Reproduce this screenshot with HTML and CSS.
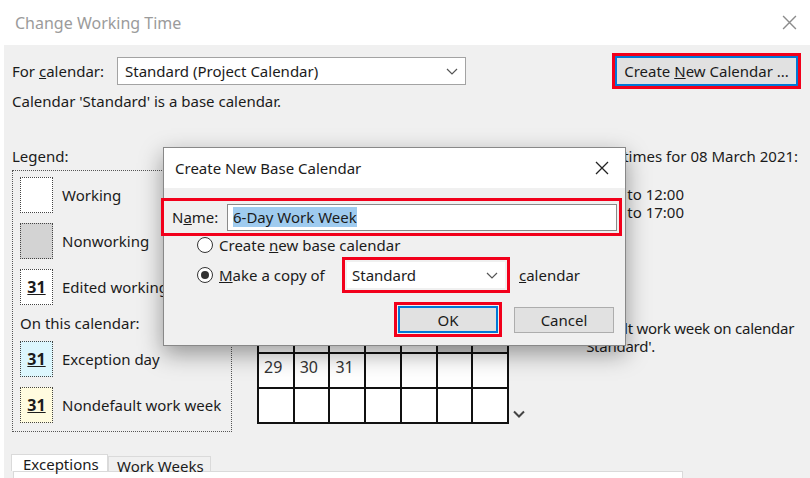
FILE: index.html
```html
<!DOCTYPE html>
<html lang="en">
<head>
    <meta charset="UTF-8">
    <title>Change Working Time</title>
    <link rel="stylesheet" href="styles.css">
</head>
<body>
    <div class="window">
        <div class="titlebar">
            <span class="title">Change Working Time</span>
            <svg class="close grey" viewBox="0 0 14 14"><path d="M1 1L13 13M13 1L1 13"/></svg>
        </div>

        <div class="content">
            <div class="calendar-row">
                <span class="for-label">For <u>c</u>alendar:</span>
                <div class="select wide">
                    <span>Standard (Project Calendar)</span>
                    <svg class="chev" viewBox="0 0 12 7"><path d="M1 1L6 6L11 1"/></svg>
                </div>
                <div class="mark new-cal"><button class="btn focus">Create <u>N</u>ew Calendar ...</button></div>
            </div>
            <div class="note">Calendar 'Standard' is a base calendar.</div>

            <div class="main">
                <div class="legend">
                    <div class="legend-title">Legend:</div>
                    <div class="legend-box">
                        <div class="item"><span class="swatch"></span>Working</div>
                        <div class="item"><span class="swatch nonworking"></span>Nonworking</div>
                        <div class="item"><span class="swatch"><b>31</b></span>Edited working hours</div>
                        <div class="on-cal">On this calendar:</div>
                        <div class="item"><span class="swatch exception"><b>31</b></span>Exception day</div>
                        <div class="item"><span class="swatch nondefault"><b>31</b></span>Nondefault work week</div>
                    </div>
                </div>

                <div class="calendar">
                    <div class="cal-label">Click on a day to see its working times:</div>
                    <div class="month-head">March 2021</div>
                    <div class="cal-wrap">
                        <table class="month">
                            <thead>
                                <tr><th>M</th><th>T</th><th>W</th><th>Th</th><th>F</th><th>S</th><th>Su</th></tr>
                            </thead>
                            <tbody>
                                <tr><td>1</td><td>2</td><td>3</td><td>4</td><td>5</td><td class="off">6</td><td class="off">7</td></tr>
                                <tr><td class="sel">8</td><td>9</td><td>10</td><td>11</td><td>12</td><td class="off">13</td><td class="off">14</td></tr>
                                <tr><td>15</td><td>16</td><td>17</td><td>18</td><td>19</td><td class="off">20</td><td class="off">21</td></tr>
                                <tr><td>22</td><td>23</td><td>24</td><td>25</td><td>26</td><td class="off">27</td><td class="off">28</td></tr>
                                <tr><td>29</td><td>30</td><td>31</td><td></td><td></td><td></td><td></td></tr>
                                <tr><td></td><td></td><td></td><td></td><td></td><td></td><td></td></tr>
                            </tbody>
                        </table>
                        <div class="scroll">
                            <svg class="scroll-chev" viewBox="0 0 12 8"><path d="M1 6L6 1L11 6"/></svg>
                            <svg class="scroll-chev" viewBox="0 0 12 8"><path d="M1 1.5L6 6.5L11 1.5"/></svg>
                        </div>
                    </div>
                </div>

                <div class="info">
                    <div class="info-head">Working times for 08 March 2021:</div>
                    <ul class="times">
                        <li>08:00 to 12:00</li>
                        <li>13:00 to 17:00</li>
                    </ul>
                    <div class="based">Based on:</div>
                    <ul class="times last">
                        <li>Default work week on calendar<br>'Standard'.</li>
                    </ul>
                </div>
            </div>

            <div class="tabs">
                <span class="tab active">Exceptions</span>
                <span class="tab">Work Weeks</span>
            </div>
            <div class="tab-panel"></div>
        </div>

        <div class="dialog">
            <div class="dlg-title">
                <span>Create New Base Calendar</span>
                <svg class="close" viewBox="0 0 14 14"><path d="M1 1L13 13M13 1L1 13"/></svg>
            </div>
            <div class="dlg-body">
                <div class="mark name-row">
                    <span class="name-label">N<u>a</u>me:</span>
                    <div class="text-input"><span class="selected">6-Day Work Week</span></div>
                </div>
                <div class="radio-row">
                    <span class="radio"></span>
                    <span>Create <u>n</u>ew base calendar</span>
                </div>
                <div class="radio-row copy-row">
                    <span class="radio checked"></span>
                    <span class="copy-label"><u>M</u>ake a copy of</span>
                    <div class="mark copy-frame">
                        <div class="select small">
                            <span>Standard</span>
                            <svg class="chev" viewBox="0 0 12 7"><path d="M1 1L6 6L11 1"/></svg>
                        </div>
                    </div>
                    <span class="cal-word"><u>c</u>alendar</span>
                </div>
                <div class="dlg-buttons">
                    <div class="mark ok-frame"><button class="btn focus">OK</button></div>
                    <button class="btn cancel">Cancel</button>
                </div>
            </div>
        </div>
    </div>
</body>
</html>
```

FILE: styles.css
```css
* {
    box-sizing: border-box;
}
body {
    margin: 0;
    font-family: "Noto Sans", "Open Sans", sans-serif;
    font-size: 15px;
    color: #1b1b1b;
    background: #fff;
}
.window {
    position: relative;
    width: 810px;
    height: 478px;
    overflow: hidden;
    background: #fff;
}
.titlebar {
    height: 45px;
    display: flex;
    align-items: center;
    justify-content: space-between;
    padding: 0 13px 0 15px;
}
.title {
    font-size: 16px;
    color: #9b9b9b;
}
.close {
    width: 14px;
    height: 14px;
    fill: none;
    stroke: #222;
    stroke-width: 1.3;
}
.close.grey {
    width: 15px;
    height: 15px;
    stroke: #8c8c8c;
}
.content {
    margin-left: 4px;
    height: 433px;
    background: #f0f0f0;
    padding: 8px 9px 0 8px;
}

/* top row */
.calendar-row {
    display: flex;
    align-items: center;
    height: 36px;
}
.for-label {
    width: 105px;
}
.select {
    display: flex;
    align-items: center;
    justify-content: space-between;
    background: #fff;
    border: 1px solid #a3a3a3;
    height: 28px;
    padding: 0 7px 0 7px;
}
.select.wide {
    width: 349px;
}
.chev {
    width: 12px;
    height: 7px;
    fill: none;
    stroke: #555;
    stroke-width: 1.2;
}
.mark {
    border: 3px solid #f2001b;
}
.new-cal {
    margin-left: auto;
}
.btn {
    font: inherit;
    color: #1b1b1b;
    background: #e1e1e1;
    border: 1px solid #adadad;
    padding: 0;
    height: 26px;
}
.btn.focus {
    border: 2px solid #0078d7;
}
.new-cal .btn {
    display: block;
    width: 183px;
    height: 30px;
}
.note {
    margin-top: 2px;
    line-height: 20px;
}

/* legend, calendar, info */
.main {
    display: flex;
    margin-top: 35px;
}
.legend {
    width: 220px;
    flex-shrink: 0;
}
.legend-title {
    line-height: 20px;
    margin-bottom: 4px;
}
.legend-box {
    height: 262px;
    border: 1px dotted #555;
    padding: 6px 0 0 7px;
}
.item {
    display: flex;
    align-items: center;
    height: 36px;
    margin-bottom: 10px;
    white-space: nowrap;
}
.swatch {
    flex-shrink: 0;
    width: 33px;
    height: 36px;
    margin-right: 9px;
    border: 1px dotted #444;
    background: #fff;
    display: flex;
    align-items: center;
    justify-content: center;
}
.swatch b {
    text-decoration: underline;
    font-size: 16px;
}
.nonworking {
    background: #d3d3d3;
}
.exception {
    background: #dcf6fd;
}
.nondefault {
    background: #fffbdf;
}
.on-cal {
    line-height: 20px;
    margin: -2px 0 8px;
}

.calendar {
    width: 275px;
    flex-shrink: 0;
    margin-left: 25px;
}
.cal-label {
    line-height: 20px;
    white-space: nowrap;
}
.month-head {
    text-align: center;
    line-height: 24px;
}
.cal-wrap {
    display: flex;
    align-items: stretch;
}
.month {
    border-collapse: collapse;
    table-layout: fixed;
    width: 252px;
    background: #fff;
}
.month th {
    font-weight: normal;
    height: 22px;
    background: #f0f0f0;
}
.month td {
    border: 2px solid #111;
    height: 35px;
    padding: 2px 0 0 5px;
    vertical-align: top;
    font-size: 16px;
    color: #333;
}
.month td.off {
    background: #d3d3d3;
}
.scroll {
    display: flex;
    flex-direction: column;
    justify-content: space-between;
    padding: 30px 0 6px 4px;
}
.scroll-chev {
    width: 12px;
    height: 8px;
    fill: none;
    stroke: #444;
    stroke-width: 2;
}

.info {
    flex: 1;
    min-width: 0;
    margin: 0 -9px 0 26px;
    line-height: 18px;
}
.info-head {
    line-height: 20px;
    white-space: nowrap;
    margin-left: 2px;
}
.times {
    margin: 19px 0 0;
    padding-left: 27px;
    white-space: nowrap;
}
.based {
    margin: 60px 0 0 -4px;
}
.times.last {
    margin-top: 20px;
    padding-left: 25px;
    letter-spacing: -0.25px;
}

/* tabs */
.tabs {
    display: flex;
    align-items: flex-end;
    margin: 22px 0 0 -1px;
    height: 17px;
}
.tab {
    height: 15px;
    line-height: 18px;
    padding: 0 6px 0 8px;
    border: 1px solid #dadada;
    border-bottom: none;
    white-space: nowrap;
}
.tab.active {
    height: 17px;
    width: 97px;
    padding-left: 11px;
    background: #fff;
}
.tab-panel {
    width: 670px;
    height: 20px;
    margin-left: 1px;
    background: #fff;
    border: 1px solid #dadada;
}

/* dialog */
.dialog {
    position: absolute;
    left: 163px;
    top: 147px;
    width: 463px;
    height: 199px;
    background: #f0f0f0;
    border: 1px solid #888;
    box-shadow: 0 8px 22px rgba(0, 0, 0, 0.38);
}
.dlg-title {
    height: 40px;
    background: #fff;
    display: flex;
    align-items: center;
    justify-content: space-between;
    padding: 0 16px 0 11px;
}
.dlg-body {
    padding-right: 11px;
}
.name-row {
    display: flex;
    align-items: center;
    width: 461px;
    height: 38px;
    margin: 10px 0 0 -3px;
    padding: 0 2px 0 8px;
}
.name-label {
    width: 55px;
}
.text-input {
    flex: 1;
    height: 27px;
    background: #fff;
    border: 1px solid #8a8a8a;
    display: flex;
    align-items: center;
    padding-left: 5px;
}
.selected {
    background: #9fcbef;
    line-height: 20px;
}
.radio-row {
    display: flex;
    align-items: center;
    height: 18px;
    line-height: 18px;
    padding-left: 33px;
    white-space: nowrap;
}
.radio {
    flex-shrink: 0;
    width: 16px;
    height: 16px;
    border: 1px solid #333;
    border-radius: 50%;
    background: #fff;
    margin-right: 6px;
    display: flex;
    align-items: center;
    justify-content: center;
}
.radio.checked::after {
    content: "";
    width: 8px;
    height: 8px;
    border-radius: 50%;
    background: #333;
}
.copy-row {
    height: 36px;
    margin-top: 3px;
}
.copy-label {
    width: 123px;
}
.copy-frame {
    width: 168px;
    height: 36px;
    padding: 2px;
}
.select.small {
    width: 158px;
    height: 26px;
    padding: 0 6px 0 4px;
    border-color: #fff;
}
.cal-word {
    margin-left: 9px;
}
.dlg-buttons {
    display: flex;
    align-items: center;
    justify-content: flex-end;
    margin-top: 9px;
}
.ok-frame {
    padding: 1px;
}
.ok-frame .btn {
    display: block;
    width: 100px;
    height: 27px;
}
.cancel {
    width: 100px;
    margin-left: 12px;
}
```
